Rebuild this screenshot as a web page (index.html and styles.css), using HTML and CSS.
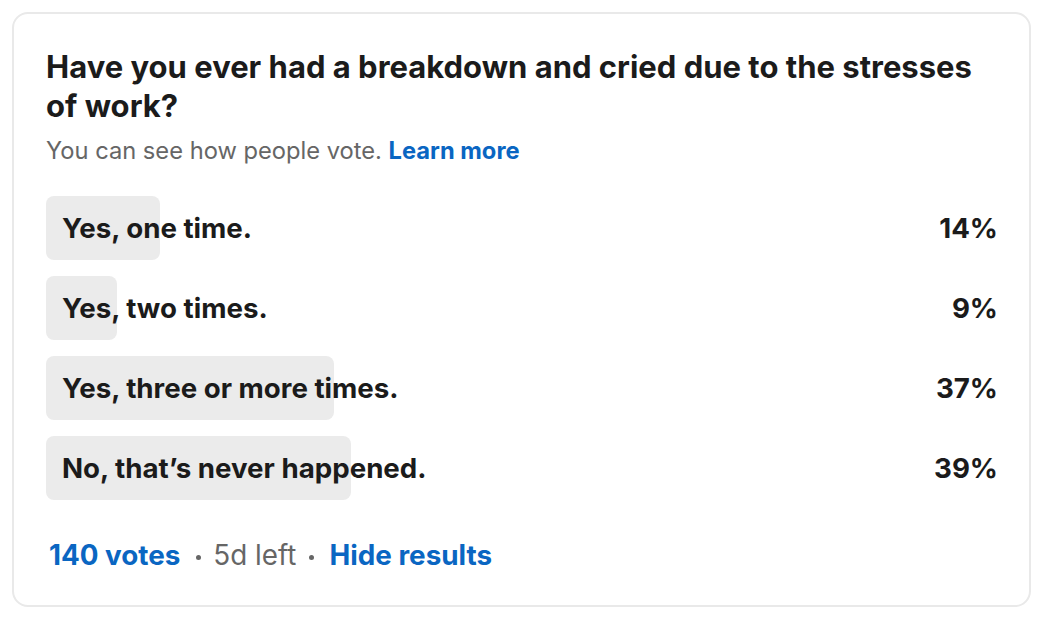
FILE: index.html
```html
<!DOCTYPE html>
<html lang="en">
<head>
<meta charset="utf-8">
<title>Poll</title>
<link rel="stylesheet" href="styles.css">
</head>
<body>
<div class="card">
  <h1 class="question">Have you ever had a breakdown and cried due to the stresses of work?</h1>
  <p class="note">You can see how people vote. <a class="link" href="#">Learn more</a></p>
  <ul class="options">
    <li class="option">
      <div class="bar" style="width:114px"></div>
      <span class="label">Yes, one time.</span>
      <span class="pct">14%</span>
    </li>
    <li class="option">
      <div class="bar" style="width:71px"></div>
      <span class="label">Yes, two times.</span>
      <span class="pct">9%</span>
    </li>
    <li class="option">
      <div class="bar" style="width:288px"></div>
      <span class="label">Yes, three or more times.</span>
      <span class="pct">37%</span>
    </li>
    <li class="option">
      <div class="bar" style="width:305px"></div>
      <span class="label">No, that’s never happened.</span>
      <span class="pct">39%</span>
    </li>
  </ul>
  <div class="footer">
    <a class="link" href="#">140 votes</a>
    <span class="dot dot-a"></span>
    <span class="meta">5d left</span>
    <span class="dot dot-b"></span>
    <a class="link" href="#">Hide results</a>
  </div>
</div>
</body>
</html>
```
FILE: styles.css
```css
* { box-sizing: border-box; }
html, body { margin: 0; padding: 0; background: #ffffff; }
body {
  font-family: Inter, "Noto Sans", "Liberation Sans", sans-serif;
  color: #1b1b1b;
}
.card {
  margin: 12px 0 0 12px;
  width: 1019px;
  height: 595px;
  border: 2px solid #e9e9e9;
  border-radius: 16px;
  padding: 33px 31px 0 32px;
}
.question {
  margin: 0;
  font-size: 31px;
  line-height: 39px;
  font-weight: 700;
  color: #1b1b1b;
}
.note {
  margin: 10px 0 0 0;
  font-size: 23.7px;
  line-height: 32px;
  color: #666666;
}
.link {
  color: #0a66c2;
  font-weight: 700;
  text-decoration: none;
}
.options {
  list-style: none;
  margin: 29px 0 0 0;
  padding: 0;
  display: flex;
  flex-direction: column;
  gap: 16px;
}
.option {
  position: relative;
  height: 64px;
  display: flex;
  align-items: center;
  justify-content: space-between;
  padding: 0 0 0 16px;
}
.bar {
  position: absolute;
  left: 0;
  top: 0;
  bottom: 0;
  background: #ebebeb;
  border-radius: 8px;
}
.label, .pct {
  position: relative;
  font-size: 27.7px;
  font-weight: 700;
  color: #1b1b1b;
}
.footer {
  margin: 39px 0 0 3px;
  display: flex;
  align-items: center;
  font-size: 27.8px;
  line-height: 32px;
}
.meta { color: #666666; }
.dot {
  width: 5px;
  height: 5px;
  border-radius: 50%;
  background: #666666;
  margin-top: 5px;
}
.dot-a { margin-left: 16px; margin-right: 12px; }
.dot-b { margin-left: 13px; margin-right: 15px; }
```
